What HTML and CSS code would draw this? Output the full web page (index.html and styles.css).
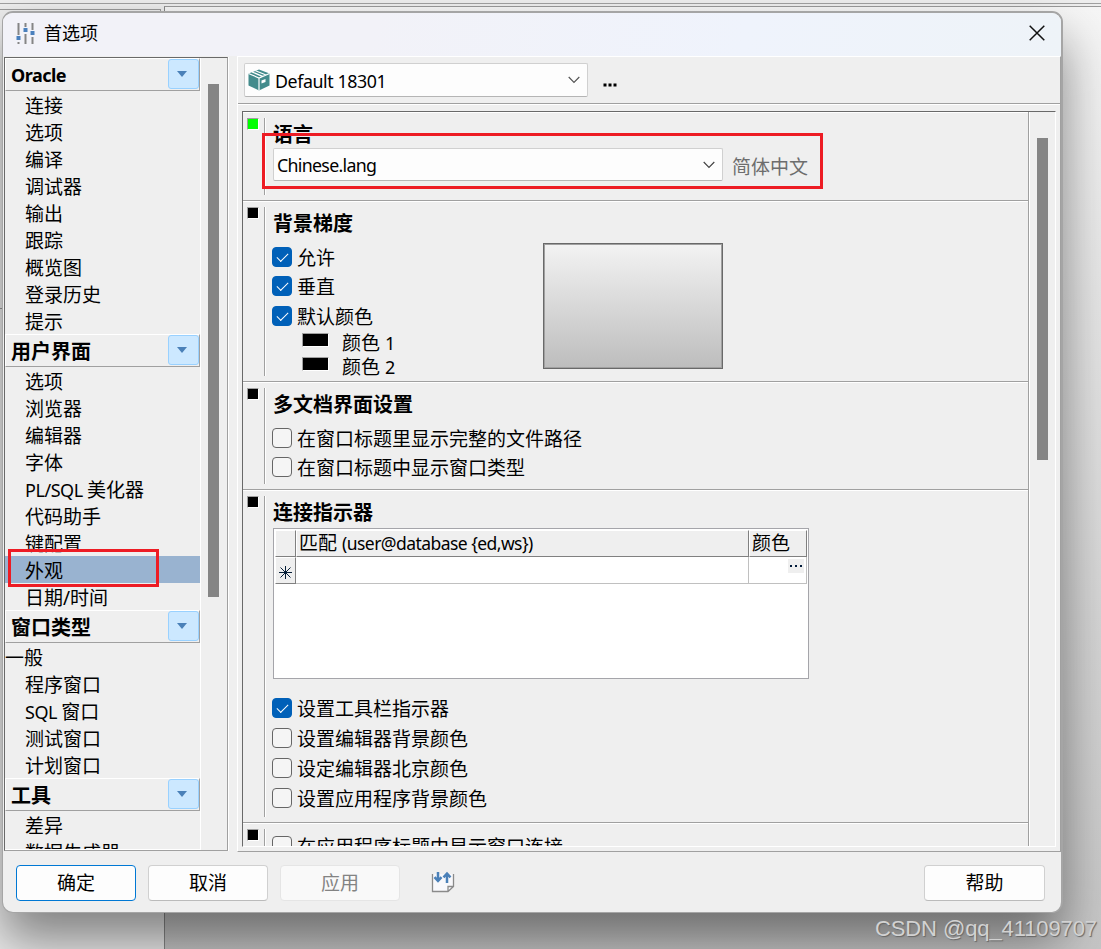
FILE: index.html
```html
<!DOCTYPE html>
<html lang="zh-CN">
<head>
<meta charset="utf-8">
<title>首选项</title>
<link rel="stylesheet" href="styles.css">
</head>
<body>
<div class="desktop">
  <div class="backdrop"><div class="dock"><div class="dock-top"></div></div><div class="workspace"></div></div>
  <main class="window">
    <header class="titlebar">
      <svg class="app-icon" width="20" height="24" viewBox="0 0 20 24"><path d="M2.500 1v21M9.500 1v21M16.500 1v21" stroke="#858585" stroke-width="2"/><path d="M0 13h5v7H0zM7 5h5v7H7zM14 8h5v7h-5z" fill="#f1f2f9"/><path d="M.5 14h4v4h-4zM7.500 6h4v4h-4zM14.500 9h4v4h-4z" fill="#4a80bd"/></svg>
      <span class="title">首选项</span>
      <svg class="close" width="16" height="16" viewBox="0 0 16 16"><path d="M.7.700l14.600 14.600M15.300.700L.7 15.300" stroke="#111" stroke-width="1.500"/></svg>
    </header>
    <div class="content">
      <nav class="sidebar">
        <div class="list">
          <div class="group latin-group">Oracle<button class="drop"></button></div>
          <div class="item">连接</div><div class="item">选项</div><div class="item">编译</div><div class="item">调试器</div><div class="item">输出</div><div class="item">跟踪</div><div class="item">概览图</div><div class="item">登录历史</div><div class="item">提示</div>
          <div class="group">用户界面<button class="drop"></button></div>
          <div class="item">选项</div><div class="item">浏览器</div><div class="item">编辑器</div><div class="item">字体</div><div class="item"><span class="latin">PL/SQL </span>美化器</div><div class="item">代码助手</div><div class="item">键配置</div><div class="item selected">外观</div><div class="item">日期/时间</div>
          <div class="group">窗口类型<button class="drop"></button></div>
          <div class="item outdent">一般</div><div class="item">程序窗口</div><div class="item"><span class="latin">SQL </span>窗口</div><div class="item">测试窗口</div><div class="item">计划窗口</div>
          <div class="group">工具<button class="drop"></button></div>
          <div class="item">差异</div><div class="item">数据生成器</div>
        </div>
        <div class="track side-track"><div class="thumb side-thumb"></div></div>
      </nav>
      <section class="panel">
        <div class="toolbar">
          <div class="combo profile">
            <svg width="22" height="22" viewBox="0 0 22 22"><path d="M11 .5l10.500 4v12L11 21.500.5 16.500v-12z" fill="#438b8c"/><path d="M.5 4.500L11 9l10.500-4.500M11 9v12.500M4 2.900l10.500 4.500M7.500 1.700l10.500 4.300" fill="none" stroke="#fff" stroke-width="1.200"/><path d="M13.500 11.500l4-1.500v3l-4 1.500z" fill="#fff"/></svg>
            <span class="profile-name">Default 18301</span>
            <svg class="chevron" width="12" height="8" viewBox="0 0 12 8"><path d="M.7 1L6 6.300 11.300 1" fill="none" stroke="#555" stroke-width="1.200"/></svg>
          </div>
          <svg class="more" width="14" height="4" viewBox="0 0 14 4"><path d="M.5.5h3v3h-3zM5.500.5h3v3h-3zM10.500.5h3v3h-3z" fill="#000"/></svg>
        </div>
        <div class="frame">
          <div class="sections">
            <div class="section language">
              <i class="mark active"></i>
              <div class="body"><h2>语言</h2>
                <div class="language-row"><div class="combo lang"><span class="lang-name">Chinese.lang</span><svg class="chevron" width="12" height="8" viewBox="0 0 12 8"><path d="M.7 1L6 6.300 11.300 1" fill="none" stroke="#444" stroke-width="1.200"/></svg></div><span class="hint">简体中文</span></div>
              </div>
            </div>
            <div class="section gradient">
              <i class="mark"></i>
              <div class="body split">
                <div class="options"><h2>背景梯度</h2>
                  <label class="check first"><i class="box on"></i>允许</label>
                  <label class="check near"><i class="box on"></i>垂直</label>
                  <label class="check"><i class="box on"></i>默认颜色</label>
                  <div class="color-row"><i class="swatch"></i>颜色<span class="number">1</span></div>
                  <div class="color-row"><i class="swatch"></i>颜色<span class="number">2</span></div>
                </div>
                <div class="preview"></div>
              </div>
            </div>
            <div class="section mdi">
              <i class="mark"></i>
              <div class="body"><h2>多文档界面设置</h2>
                <label class="check first"><i class="box"></i>在窗口标题里显示完整的文件路径</label>
                <label class="check near"><i class="box"></i>在窗口标题中显示窗口类型</label>
              </div>
            </div>
            <div class="section indicator">
              <i class="mark"></i>
              <div class="body"><h2>连接指示器</h2>
                <div class="grid">
                  <div class="cell head"></div><div class="cell head">匹配<span class="pattern">(user@database {ed,ws})</span></div><div class="cell head">颜色</div>
                  <div class="cell star"><svg width="13" height="13" viewBox="0 0 13 13"><path d="M6.500 0v13M0 6.500h13M1.500 1.500l10 10M11.500 1.500l-10 10" stroke="#061f38" stroke-width="1"/></svg></div><div class="cell value"></div><div class="cell value pick"><span class="pick-button"><svg width="12" height="2" viewBox="0 0 12 2"><path d="M0 0h2v2H0zM5 0h2v2H5zM10 0h2v2h-2z" fill="#001a3a"/></svg></span></div>
                </div>
                <label class="check after-grid"><i class="box on"></i>设置工具栏指示器</label>
                <label class="check"><i class="box"></i>设置编辑器背景颜色</label>
                <label class="check"><i class="box"></i>设定编辑器北京颜色</label>
                <label class="check"><i class="box"></i>设置应用程序背景颜色</label>
              </div>
            </div>
            <div class="section more-options">
              <i class="mark"></i>
              <div class="body"><label class="check"><i class="box"></i>在应用程序标题中显示窗口连接</label></div>
            </div>
          </div>
          <div class="track main-track"><div class="thumb main-thumb"></div></div>
        </div>
      </section>
    </div>
    <footer class="footer">
      <button class="button primary">确定</button>
      <button class="button">取消</button>
      <button class="button disabled">应用</button>
      <svg class="transfer" width="24" height="22" viewBox="0 0 24 22"><path d="M1.500 3v17.500h15.500l5.500-5V3" fill="#f8f8fb"/><path d="M1.500 3v17.500h15.500l5.500-5V3M17 20v-4.500h5" fill="none" stroke="#8a8a8a" stroke-width="1.300"/><path d="M7 1v9M3.500 6.200L7 10l3.500-3.800M16 12V3M12.500 6.300L16 2.500l3.500 3.800" fill="none" stroke="#4a80b8" stroke-width="2.500"/></svg>
      <button class="button help">帮助</button>
    </footer>
  </main>
  <div class="outline outline-nav"></div>
  <div class="outline outline-language"></div>
  <div class="watermark">CSDN @qq_41109707</div>
</div>
</body>
</html>
```
FILE: styles.css
```css
* { box-sizing: border-box; }
body { margin: 0; overflow: hidden; font: 19px/27px "Noto Sans", "Noto Sans CJK SC", sans-serif; color: #000; }
.desktop { position: relative; width: 1101px; height: 949px; overflow: hidden; }
.backdrop { display: flex; height: 949px; padding-top: 6px; background: linear-gradient(#eee 0 3px, #a0a0a0 3px 4px, #eee 4px); }
.dock { width: 164px; padding-top: 3px; background: #ececec; }
.dock-top { width: 161px; height: 300px; border: 1px solid #999; border-left: 0; }
.workspace { flex: 1; border-top: 1px solid #999; border-left: 1px solid #888; background: linear-gradient(#f6f6f6, #d8d8d8 60%, #c6c6c6); }

.window { position: absolute; left: 2px; top: 11px; width: 1061px; height: 902px; display: flex; flex-direction: column; border: 2px solid #a5a5a5; border-left-width: 1px; border-bottom-width: 1px; border-radius: 11px; background: #efefef; overflow: hidden; box-shadow: 0 28px 50px rgba(0,0,0,.45); }
.titlebar { display: flex; align-items: center; flex: none; height: 43px; padding: 0 16px 0 13px; background: linear-gradient(100deg, #f2f2f8 0 35%, #eff3fc 70%, #eef3f8); }
.app-icon { margin-top: -2px; }
.title { margin-left: 8px; font-size: 18px; line-height: 28px; margin-top: -3px; }
.close { margin: -3px 0 0 auto; }
.content { display: flex; flex: none; height: 796px; gap: 9px; padding-left: 1px; }

.sidebar { display: flex; width: 224px; height: 794px; margin-top: 1px; border: 1px solid #a0a0a0; border-top-color: #696969; border-left-color: #696969; box-shadow: 1px 0 #fff; }
.list { width: 195px; height: 792px; overflow: hidden; border-bottom: 1px solid #fff; }
.item { height: 27px; padding: 1px 0 0 20px; line-height: 28px; white-space: pre; }
.item.selected { background: #99b3d0; }
.item.outdent { padding-left: 0; }
.latin { font-size: 18px; letter-spacing: -.45px; }
.group { display: flex; align-items: center; justify-content: space-between; height: 33px; padding: 1px 0 0 5px; border: 1px solid #a0a0a0; border-top-color: #fff; border-left-color: #fff; font-size: 20px; font-weight: 700; }
.latin-group { font-size: 18px; letter-spacing: -.5px; }
.drop { display: flex; align-items: center; justify-content: center; width: 31px; height: 30px; margin-top: -2px; padding: 0 3px 0 0; border: 1px solid #99d1ff; border-radius: 3px; background: #cce8ff; }
.drop::before { content: ""; border: 5px solid transparent; border-top: 6px solid #4a80b8; border-bottom: 0; }
.track { border-left: 1px solid #fff; }
.side-track { flex: 1; padding: 26px 0 0 7px; }
.thumb { width: 11px; background: #858585; }
.side-thumb { height: 513px; }

.panel { width: 824px; height: 796px; border: 1px solid #a0a0a0; border-top-color: #fff; border-left-color: #fff; }
.toolbar { display: flex; align-items: flex-start; height: 47px; padding: 6px 0 0 6px; border-bottom: 1px solid #a0a0a0; box-shadow: 0 1px #fff; }
.combo { display: flex; align-items: center; border: 1px solid #d0d0d0; border-bottom-color: #b5b5b5; border-radius: 2px; background: #fdfdfd; }
.profile { width: 344px; height: 34px; padding: 0 7px 0 3px; }
.profile-name { margin-left: 5px; padding-top: 2px; font-size: 17.800px; letter-spacing: -.4px; }
.chevron { margin-left: auto; }
.more { margin: 20px 0 0 15px; }
.frame { display: flex; width: 814px; height: 736px; margin: 7px 0 0 4px; border: 1px solid #696969; border-right-color: #fff; border-bottom-color: #fff; }
.sections { width: 786px; height: 734px; overflow: hidden; border-right: 1px solid #a0a0a0; }
.section { display: flex; gap: 6px; padding: 5px 0 5px 4px; border-top: 1px solid #fff; border-bottom: 1px solid #a0a0a0; }
.language { height: 89px; }
.gradient { height: 181px; }
.mdi { height: 108px; }
.indicator { height: 333px; }
.mark { flex: none; width: 12px; height: 12px; border: 1px solid #a0a0a0; border-right-color: #fff; border-bottom-color: #fff; background: #000; }
.mark.active { background: #0f0; }
.body { flex: 1; border-left: 1px solid #a0a0a0; box-shadow: inset 1px 0 #fff; margin-left: -1px; padding-left: 8px; min-width: 0; }
h2 { height: 30px; margin: 0; padding-top: 2px; font-size: 20px; line-height: 30px; font-weight: 700; }
.language-row { display: flex; align-items: center; gap: 9px; }
.lang { width: 450px; height: 33px; padding: 0 7px 0 3px; }
.lang-name { padding-top: 2px; font-size: 17.800px; letter-spacing: -.7px; }
.hint { color: #6d6d6d; padding-top: 5px; }
.split { display: flex; }
.options { width: 270px; }
.preview { width: 180px; height: 126px; margin-top: 36px; border: 1px solid #696969; background: linear-gradient(#f3f3f3, #bdbdbd); box-shadow: inset 0 0 0 1px #a0a0a0; }
.check { display: flex; align-items: center; height: 20px; gap: 5px; margin: 10px 0 0 -1px; line-height: 24px; white-space: nowrap; }
.check::after { content: ""; }
.check.near { margin-top: 9px; }
.check { align-items: flex-start; line-height: 22px; }
.box { display: flex; align-items: center; justify-content: center; flex: none; width: 20px; height: 20px; border: 1px solid #666; border-radius: 4px; background: #f5f5f5; }
.box.on { background: #0060b8; border-color: #0060b8; }
.box.on::before { content: ""; width: 10px; height: 5px; border: solid #fff; border-width: 0 0 1px 1px; transform: translateY(-1px) rotate(-45deg); }
.color-row { display: flex; align-items: center; height: 24px; padding-left: 29px; }
.check + .color-row { margin-top: 5px; }
.swatch { width: 27px; height: 14px; margin: -6px 13px 0 0; border: 1px solid #a0a0a0; border-right-color: #fff; border-bottom-color: #fff; background: #000; }
.number { margin-left: 5px; font-size: 18px; }
.grid { display: grid; grid-template-columns: 21px 453px 58px; grid-template-rows: 27px 27px; width: 536px; height: 151px; padding: 1px; margin-top: 2px; border: 1px solid #a5a5aa; background: #fff; }
.cell { display: flex; align-items: center; }
.head { padding-left: 2px; border: 1px solid #808080; border-top-color: #fff; border-left-color: #fff; background: #efefef; }
.pattern { margin-left: 5px; font-size: 17.500px; letter-spacing: -.55px; }
.star { justify-content: center; padding-top: 3px; border: 1px solid #808080; border-top-color: #fff; border-left-color: #fff; background: #efefef; }
.value { border: solid #c0c0c0; border-width: 0 1px 1px 0; }
.pick { justify-content: flex-end; align-items: flex-start; padding: 2px 2px 0 0; }
.pick-button { display: flex; align-items: center; justify-content: center; width: 16px; height: 14px; background: #efefef; }
.check.after-grid { margin-top: 19px; }
.more-options { height: 60px; }
.more-options .check { margin-top: 7px; }
.main-track { flex: 1; padding: 26px 0 0 7px; }
.main-thumb { height: 322px; }

.footer { display: flex; align-items: flex-start; flex: 1; gap: 12px; padding: 13px 16px 0 13px; }
.button { width: 120px; height: 36px; padding: 0; border: 1px solid #d0d0d0; border-bottom-color: #bbb; border-radius: 4px; background: #fdfdfd; font: inherit; color: #000; }
.primary { border-color: #0078d4; }
.disabled { border-color: #e5e5e5; background: #f9f9f9; color: #838383; }
.transfer { margin: 6px 0 0 19px; }
.help { width: 121px; margin-left: auto; }

.outline { position: absolute; border: 3px solid #ed1c24; }
.outline-nav { left: 8px; top: 549px; width: 151px; height: 38px; }
.outline-language { left: 262px; top: 133px; width: 561px; height: 56px; }
.watermark { position: absolute; right: 4px; bottom: 6px; color: #d2d2d2; font: 22px/28px "Liberation Sans", sans-serif; letter-spacing: -.1px; text-shadow: 1px 1px 1px #666; white-space: nowrap; }
```
